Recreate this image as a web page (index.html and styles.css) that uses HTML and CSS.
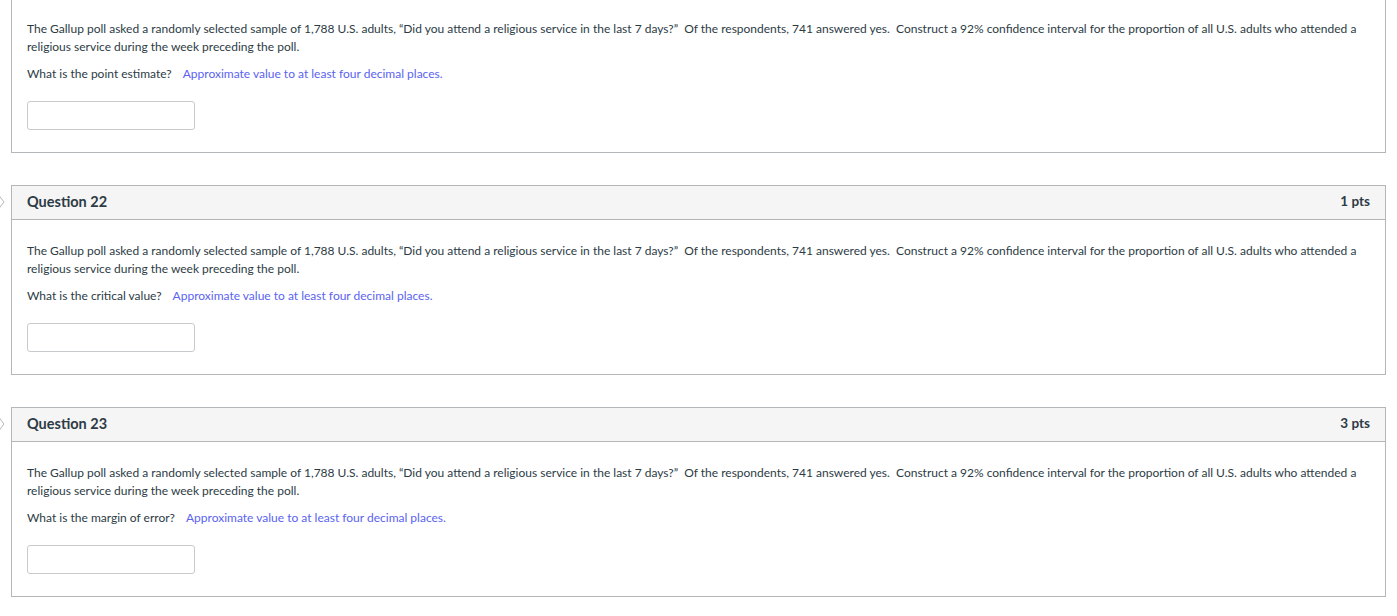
FILE: index.html
```html
<!DOCTYPE html>
<html lang="en">
<head>
<meta charset="utf-8">
<title>Quiz</title>
<link rel="stylesheet" href="styles.css">
</head>
<body>
<div class="quiz">
  <section class="question">
    <div class="q-head"><span class="q-name">Question 21</span><span class="q-pts">1 pts</span></div>
    <div class="q-body">
      <p>The Gallup poll asked a randomly selected sample of 1,788 U.S. adults, “Did you attend a religious service in the last 7 days?” &nbsp;Of the respondents, 741 answered yes. &nbsp;Construct a 92% confidence interval for the proportion of all U.S. adults who attended a religious service during the week preceding the poll.</p>
      <p>What is the point estimate? <span class="hint">Approximate value to at least four decimal places.</span></p>
      <input class="answer" type="text">
    </div>
  </section>
  <section class="question">
    <svg class="flag" width="8" height="16" viewBox="0 0 8 16"><path d="M1 1.5 L6 8 L1 14.5" fill="none" stroke="#b5b9bd" stroke-width="1"/></svg>
    <div class="q-head"><span class="q-name">Question 22</span><span class="q-pts">1 pts</span></div>
    <div class="q-body">
      <p>The Gallup poll asked a randomly selected sample of 1,788 U.S. adults, “Did you attend a religious service in the last 7 days?” &nbsp;Of the respondents, 741 answered yes. &nbsp;Construct a 92% confidence interval for the proportion of all U.S. adults who attended a religious service during the week preceding the poll.</p>
      <p>What is the critical value? <span class="hint">Approximate value to at least four decimal places.</span></p>
      <input class="answer" type="text">
    </div>
  </section>
  <section class="question">
    <svg class="flag" width="8" height="16" viewBox="0 0 8 16"><path d="M1 1.5 L6 8 L1 14.5" fill="none" stroke="#b5b9bd" stroke-width="1"/></svg>
    <div class="q-head"><span class="q-name">Question 23</span><span class="q-pts">3 pts</span></div>
    <div class="q-body">
      <p>The Gallup poll asked a randomly selected sample of 1,788 U.S. adults, “Did you attend a religious service in the last 7 days?” &nbsp;Of the respondents, 741 answered yes. &nbsp;Construct a 92% confidence interval for the proportion of all U.S. adults who attended a religious service during the week preceding the poll.</p>
      <p>What is the margin of error? <span class="hint">Approximate value to at least four decimal places.</span></p>
      <input class="answer" type="text">
    </div>
  </section>
</div>
</body>
</html>
```
FILE: styles.css
```css
html, body {
  margin: 0;
  padding: 0;
  background: #ffffff;
  overflow: hidden;
}
body {
  font-family: Lato, "Open Sans", "Liberation Sans", sans-serif;
  color: #2d3b45;
  font-size: 12px;
}
.quiz {
  display: flex;
  flex-direction: column;
  gap: 32px;
  padding: 0 11px;
  margin-top: -37px;
}
.question {
  position: relative;
  border: 1px solid #b3b7ba;
  background: #ffffff;
}
.flag {
  position: absolute;
  left: -14px;
  top: 8px;
}
.q-head {
  display: flex;
  justify-content: space-between;
  align-items: center;
  box-sizing: border-box;
  height: 34px;
  padding: 0 15px 3px;
  background: #f5f5f5;
  border-bottom: 1px solid #b3b7ba;
}
.q-name {
  font-size: 14.5px;
  font-weight: 700;
}
.q-pts {
  font-size: 13.5px;
  font-weight: 700;
}
.q-body {
  display: flex;
  flex-direction: column;
  align-items: flex-start;
  padding: 22px 15px 22px;
}
.q-body p {
  margin: 0 0 9px;
  line-height: 18px;
}
.q-body p + p {
  margin-bottom: 18px;
}
.hint {
  color: #5a63f0;
  margin-left: 8px;
}
.answer {
  box-sizing: border-box;
  width: 168px;
  height: 29px;
  margin: 0;
  border: 1px solid #c7cbce;
  border-radius: 3px;
  background: #fff;
}
```
